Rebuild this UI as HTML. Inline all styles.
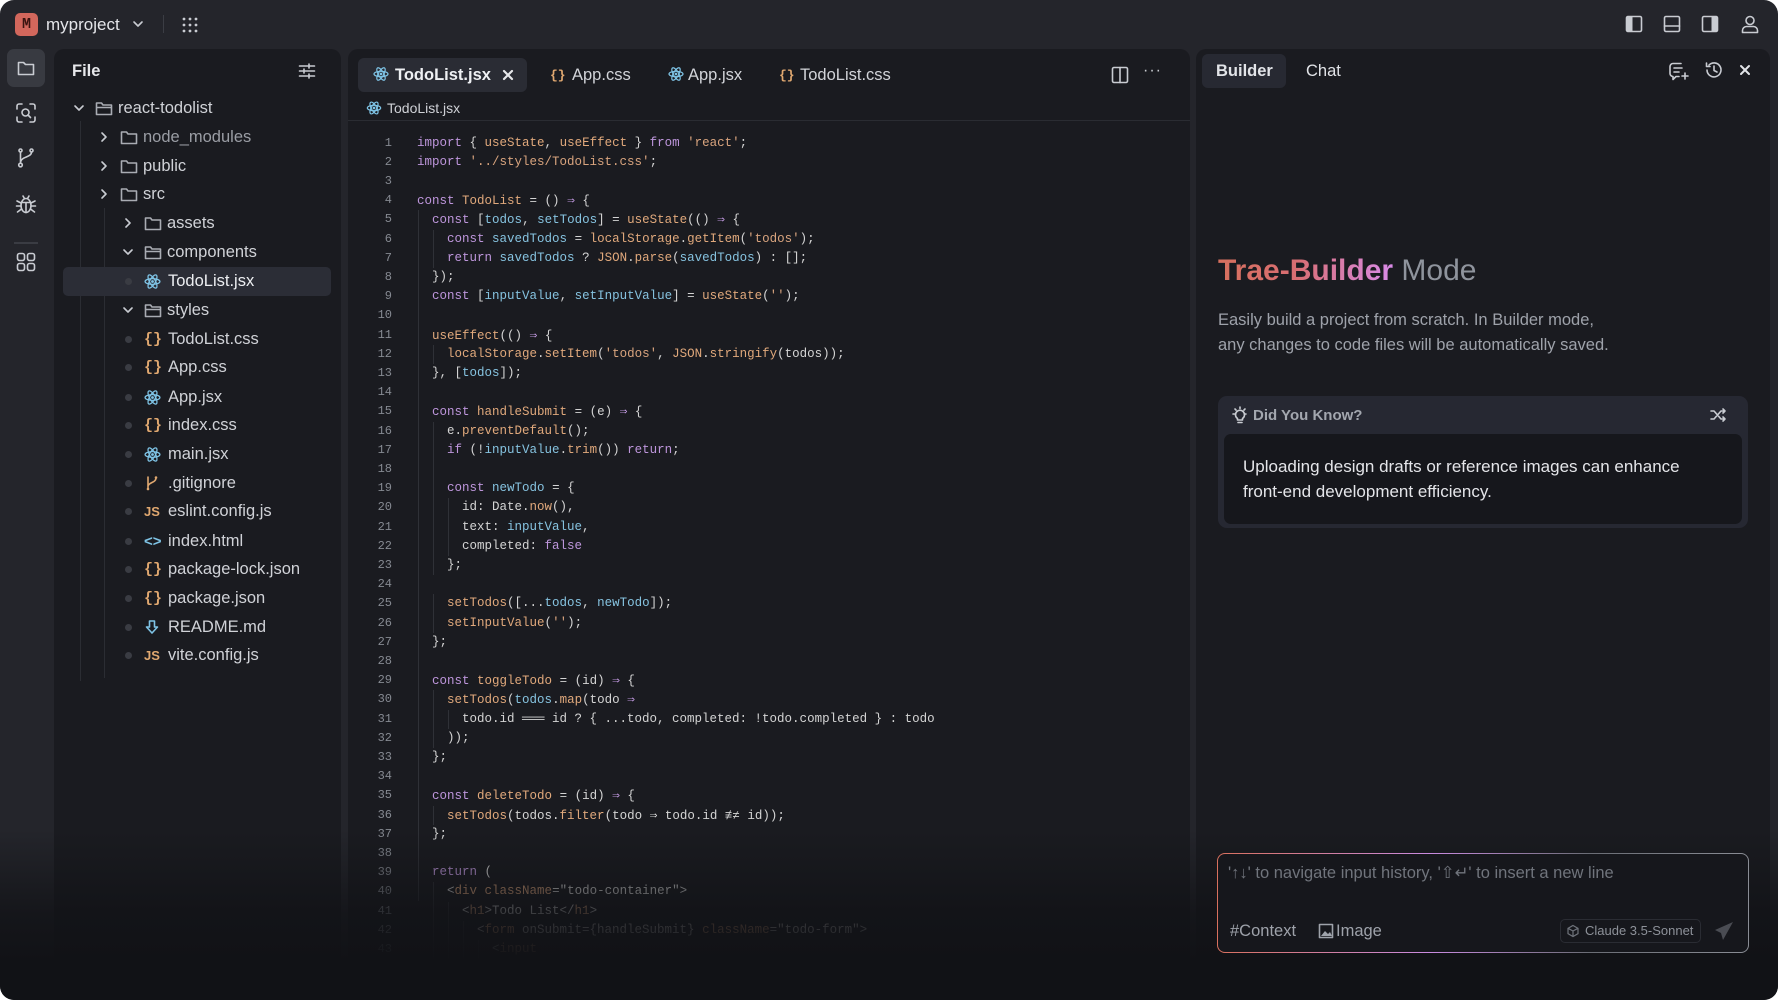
<!DOCTYPE html>
<html><head><meta charset="utf-8"><style>
*{margin:0;padding:0;box-sizing:border-box}
html,body{width:1778px;height:1000px;overflow:hidden;background:#fff}
body{font-family:"Liberation Sans",sans-serif;color:#d4d6db}
#win{position:absolute;left:0;top:0;width:1778px;height:1000px;background:#24252b;border-radius:14px;overflow:hidden}
.abs{position:absolute}
.panel{position:absolute;background:#1a1b20;border-radius:10px}
.row{position:absolute;height:29px;line-height:29px;font-size:16.5px;color:#d0d2d7;white-space:nowrap}
.code{position:absolute;left:0;font-family:"Liberation Mono",monospace;font-size:12.5px;white-space:pre;height:19.2px;line-height:19.2px;color:#d4d4d4}
.ln{position:absolute;width:40px;text-align:right;left:352px;font-family:"Liberation Mono",monospace;font-size:12px;color:#868a92;height:19.2px;line-height:19.2px}
.k{color:#be96dc}.f{color:#e1a97c}.v{color:#86c3e0}.s{color:#d9a47e}.t{color:#d6a07a}
.a{color:#be96dc;font-family:"DejaVu Sans Mono",monospace;font-size:13px}
.ic{stroke:#c9ccd2;fill:none;stroke-width:1.6;stroke-linecap:round;stroke-linejoin:round}
.dot{position:absolute;width:7px;height:7px;border-radius:50%;background:#3a3c43}
.br{color:#e0a870;font-family:"Liberation Mono",monospace;font-size:15px;font-weight:bold}
</style></head><body>
<div id="win">
<!-- top bar -->
<div class="abs" style="left:15px;top:13px;width:23px;height:23px;border-radius:5px;background:#d2675c;color:#3a1410;font-family:'Liberation Mono',monospace;font-size:15px;font-weight:bold;text-align:center;line-height:23px">M</div>
<div class="abs" style="left:46px;top:13px;font-size:17px;color:#e4e5e9;line-height:23px">myproject</div>
<svg class="abs" style="left:131px;top:18px" width="14" height="12"><path class="ic" d="M3 4l4 4 4-4"/></svg>
<div class="abs" style="left:163px;top:15px;width:1px;height:18px;background:#3b3d44"></div>
<svg class="abs" style="left:181px;top:16px" width="18" height="18" fill="#c9ccd2"><circle cx="3" cy="3" r="1.4"/><circle cx="9" cy="3" r="1.4"/><circle cx="15" cy="3" r="1.4"/><circle cx="3" cy="9" r="1.4"/><circle cx="9" cy="9" r="1.4"/><circle cx="15" cy="9" r="1.4"/><circle cx="3" cy="15" r="1.4"/><circle cx="9" cy="15" r="1.4"/><circle cx="15" cy="15" r="1.4"/></svg>
<svg class="abs" style="left:1625px;top:15px" width="18" height="18"><rect x="1.5" y="1.5" width="15" height="15" rx="1.5" class="ic"/><rect x="1.5" y="1.5" width="6" height="15" fill="#c9ccd2"/></svg>
<svg class="abs" style="left:1663px;top:15px" width="18" height="18"><rect x="1.5" y="1.5" width="15" height="15" rx="1.5" class="ic"/><path class="ic" d="M1.5 11h15"/></svg>
<svg class="abs" style="left:1701px;top:15px" width="18" height="18"><rect x="1.5" y="1.5" width="15" height="15" rx="1.5" class="ic"/><rect x="10.5" y="1.5" width="6" height="15" fill="#c9ccd2"/></svg>
<svg class="abs" style="left:1740px;top:14px" width="20" height="20"><circle cx="10" cy="6.5" r="4" class="ic"/><path class="ic" d="M2.5 18.5v-2a4 4 0 0 1 4-4h7a4 4 0 0 1 4 4v2z"/></svg>

<!-- activity bar -->
<div class="abs" style="left:7px;top:49px;width:38px;height:38px;border-radius:7px;background:#383a41"></div>
<svg class="abs" style="left:16px;top:58px" width="20" height="20"><path class="ic" d="M2.5 4.5h5l2 2h8v10h-15z"/></svg>
<svg class="abs" style="left:15px;top:102px" width="22" height="22"><path class="ic" d="M2 7V4a2 2 0 0 1 2-2h3M15 2h3a2 2 0 0 1 2 2v3M20 15v3a2 2 0 0 1-2 2h-3M7 20H4a2 2 0 0 1-2-2v-3"/><circle cx="10.5" cy="10.5" r="3.5" class="ic"/><path class="ic" d="M13 13l2.5 2.5"/></svg>
<svg class="abs" style="left:16px;top:147px" width="20" height="22"><circle cx="4.5" cy="18" r="1.8" class="ic"/><circle cx="4.5" cy="3.5" r="1.5" class="ic"/><circle cx="15.5" cy="3.5" r="1.5" class="ic"/><path class="ic" d="M4.5 5v11M15.5 5c0 6-11 4-11 11"/></svg>
<svg class="abs" style="left:15px;top:193px" width="22" height="22"><ellipse cx="11" cy="12.5" rx="5" ry="7" class="ic"/><path class="ic" d="M6.5 9.5h9M11 9.5v10M2 8l4 2M20 8l-4 2M1.5 13h4.5M20.5 13H16M2.5 19l4-3M19.5 19l-4-3M8 3l1.5 2.5M14 3l-1.5 2.5"/></svg>
<div class="abs" style="left:14px;top:242px;width:24px;height:2px;background:#3a3c43"></div>
<svg class="abs" style="left:16px;top:252px" width="20" height="20"><rect x="1.5" y="1.5" width="7" height="7" rx="2" class="ic"/><rect x="11.5" y="1.5" width="7" height="7" rx="2" class="ic"/><rect x="1.5" y="11.5" width="7" height="7" rx="2" class="ic"/><rect x="11.5" y="11.5" width="7" height="7" rx="2" class="ic"/></svg>

<!-- file panel -->
<div class="panel" style="left:54px;top:49px;width:287px;height:930px"></div>
<div class="abs" style="left:72px;top:60px;font-size:16.5px;font-weight:bold;color:#e6e7ea;line-height:22px">File</div>
<svg class="abs" style="left:298px;top:62px" width="18" height="18"><path class="ic" d="M1.5 4h15M1.5 9h15M1.5 14h15"/><path class="ic" d="M11 2v4M6 7v4M11 12v4" stroke-width="2"/></svg>
<div class="abs" style="left:80px;top:121px;width:1px;height:560px;background:#2b2d33"></div>
<div class="abs" style="left:104px;top:208px;width:1px;height:470px;background:#2b2d33"></div>
<div class="abs" style="left:63px;top:267px;width:268px;height:29px;border-radius:5px;background:#2b2d36"></div>
<div id="tree"></div>

<!-- editor panel -->
<div class="panel" style="left:348px;top:49px;width:842px;height:930px"></div>
<div class="abs" style="left:358px;top:58px;width:169px;height:34px;border-radius:6px;background:#2a2c34"></div>
<div id="tabs"></div>
<svg class="abs" style="left:1111px;top:66px" width="18" height="18"><rect x="1.5" y="1.5" width="15" height="15" rx="1.5" class="ic"/><path class="ic" d="M9 1.5v15"/></svg>
<div class="abs" style="left:1143px;top:62px;font-size:16px;color:#c9ccd2;letter-spacing:1px">···</div>
<svg class="abs" style="left:366px;top:100px" width="16" height="16" viewBox="0 0 24 24"><g fill="none" stroke="#7fc4e6" stroke-width="1.8"><ellipse cx="12" cy="12" rx="10" ry="4"/><ellipse cx="12" cy="12" rx="10" ry="4" transform="rotate(60 12 12)"/><ellipse cx="12" cy="12" rx="10" ry="4" transform="rotate(120 12 12)"/></g><circle cx="12" cy="12" r="2" fill="#7fc4e6"/></svg>
<div class="abs" style="left:387px;top:99px;font-size:14px;color:#cfd1d6;line-height:18px">TodoList.jsx</div>
<div class="abs" style="left:348px;top:120px;width:842px;height:1px;background:#2a2c32"></div>
<div id="code"></div>

<!-- right panel -->
<div class="panel" style="left:1196px;top:49px;width:574px;height:930px"></div>
<div class="abs" style="left:1202px;top:54px;width:84px;height:34px;border-radius:6px;background:#272932"></div>
<div class="abs" style="left:1216px;top:61px;font-size:16.5px;font-weight:bold;color:#e2e4e8;line-height:20px">Builder</div>
<div class="abs" style="left:1306px;top:61px;font-size:16.5px;color:#e2e4e8;line-height:20px">Chat</div>
<svg class="abs" style="left:1668px;top:61px" width="22" height="20"><path class="ic" d="M13 2.5H5a3 3 0 0 0-3 3v7a3 3 0 0 0 3 3v3l3-3h3"/><path class="ic" d="M6 7h8M6 11h5M17 12v6M14 15h6"/></svg>
<svg class="abs" style="left:1704px;top:60px" width="20" height="20"><path class="ic" d="M3 10a7 7 0 1 0 2-5M2.5 3v3.5H6M10 6v4.5l3 1.5"/></svg>
<svg class="abs" style="left:1739px;top:64px" width="12" height="12"><path class="ic" d="M2 2l8 8M10 2l-8 8" style="stroke:#e2e4e8;stroke-width:2"/></svg>

<div class="abs" style="left:1218px;top:251px;font-size:30px;font-weight:bold;line-height:40px;white-space:nowrap"><span style="background:linear-gradient(90deg,#d7705e,#d86e73 45%,#d98be8);-webkit-background-clip:text;background-clip:text;color:transparent">Trae-Builder</span><span style="color:#8f949d;font-weight:normal"> Mode</span></div>
<div class="abs" style="left:1218px;top:308px;font-size:16.5px;line-height:25px;color:#9ea2aa;width:520px">Easily build a project from scratch. In Builder mode,<br>any changes to code files will be automatically saved.</div>

<div class="abs" style="left:1218px;top:396px;width:530px;height:132px;border-radius:9px;background:#262832"></div>
<svg class="abs" style="left:1231px;top:406px" width="18" height="18"><path class="ic" d="M6.5 12.5a4.5 4.5 0 1 1 5 0V14h-5zM7 16.5h4M9 1v1.5M2 8h1.5M15 8h-1.5M4 3l1 1M14 3l-1 1"/></svg>
<div class="abs" style="left:1253px;top:407px;font-size:15px;font-weight:bold;color:#a3a7af;line-height:18px">Did You Know?</div>
<svg class="abs" style="left:1709px;top:406px" width="18" height="18"><path class="ic" d="M2 5h3l7 8h4M2 13h3l7-8h4M14 3l2 2-2 2M14 11l2 2-2 2"/></svg>
<div class="abs" style="left:1224px;top:434px;width:518px;height:90px;border-radius:7px;background:#16171c"></div>
<div class="abs" style="left:1243px;top:454px;font-size:17px;line-height:25px;color:#e4e5e9;width:480px">Uploading design drafts or reference images can enhance<br>front-end development efficiency.</div>

<!-- global bottom fade -->
<div class="abs" style="left:0;top:830px;width:1778px;height:170px;background:linear-gradient(rgba(17,18,22,0),rgba(17,18,22,0.8) 50%,#111216 78%)"></div>

<div class="abs" style="left:1217px;top:853px;width:532px;height:100px;border-radius:8px;padding:1px;background:linear-gradient(90deg,#d9705e,#c98be0 40%,#6a6d75 70%,#8a8d95)"><div style="width:100%;height:100%;border-radius:7px;background:#16171c"></div></div>
<div class="abs" style="left:1228px;top:863px;font-size:16.5px;color:#70747c;line-height:20px;white-space:nowrap">'↑↓' to navigate input history, '⇧↵' to insert a new line</div>
<div class="abs" style="left:1230px;top:921px;font-size:16.5px;color:#9ea2aa;line-height:20px">#Context</div>
<svg class="abs" style="left:1318px;top:923px" width="16" height="16"><rect x="1.5" y="1.5" width="13" height="13" class="ic" style="stroke:#9ea2aa"/><path d="M3 13l4-5 3 3 2-2 2 4z" fill="#9ea2aa"/></svg>
<div class="abs" style="left:1336px;top:921px;font-size:16.5px;color:#9ea2aa;line-height:20px">Image</div>
<div class="abs" style="left:1560px;top:919px;width:141px;height:24px;border-radius:5px;border:1px solid #2a2c33"></div>
<svg class="abs" style="left:1566px;top:924px" width="14" height="14"><path d="M7 1.5l5 2.8v5.4L7 12.5 2 9.7V4.3zM2 4.3L7 7l5-2.7M7 7v5.5" fill="none" stroke="#6f737b" stroke-width="1.2"/></svg>
<div class="abs" style="left:1585px;top:923px;font-size:13px;color:#8d9199;line-height:16px">Claude 3.5-Sonnet</div>
<svg class="abs" style="left:1713px;top:920px" width="22" height="22"><path d="M20 2L2 10l6 3 2 7z" fill="#4a4c53"/></svg>
</div>
<script>
const tree=[
[0,'c','fo','react-todolist',108,'#d0d2d7'],
[1,'r','f','node_modules',137,'#9a9da4'],
[1,'r','f','public',166],
[1,'r','f','src',194],
[2,'r','f','assets',223],
[2,'c','fo','components',252],
[3,'d','react','TodoList.jsx',281,'#eceef1'],
[2,'c','fo','styles',310],
[3,'d','css','TodoList.css',339],
[3,'d','css','App.css',367],
[3,'d','react','App.jsx',397],
[3,'d','css','index.css',425],
[3,'d','react','main.jsx',454],
[3,'d','git','.gitignore',483],
[3,'d','js','eslint.config.js',511],
[3,'d','html','index.html',541],
[3,'d','css','package-lock.json',569],
[3,'d','css','package.json',598],
[3,'d','md','README.md',627],
[3,'d','js','vite.config.js',655]];
const react='<svg width="17" height="17" viewBox="0 0 24 24"><g fill="none" stroke="#7fc4e6" stroke-width="1.8"><ellipse cx="12" cy="12" rx="10.5" ry="4"/><ellipse cx="12" cy="12" rx="10.5" ry="4" transform="rotate(60 12 12)"/><ellipse cx="12" cy="12" rx="10.5" ry="4" transform="rotate(120 12 12)"/></g><circle cx="12" cy="12" r="2" fill="#7fc4e6"/></svg>';
let h='';
for(const [lv,ch,ic,name,y,col] of tree){
 const base=lv===3?128:(lv===0?79:lv===1?104:128);
 const top=y-14;
 if(ch==='c') h+=`<svg class="abs" style="left:${base-6}px;top:${y-6}px" width="12" height="12"><path class="ic" d="M2 4l4 4 4-4"/></svg>`;
 if(ch==='r') h+=`<svg class="abs" style="left:${base-6}px;top:${y-6}px" width="12" height="12"><path class="ic" d="M4 2l4 4-4 4"/></svg>`;
 if(ch==='d') h+=`<div class="dot" style="left:${base-3}px;top:${y-3}px"></div>`;
 const ix=lv===3?144:base+16;
 let icon='';
 if(ic==='f') icon='<svg width="18" height="16"><path class="ic" style="stroke:#a9acb3" d="M1.5 3h5l1.5 2h8.5v9.5h-15z"/></svg>';
 else if(ic==='fo') icon='<svg width="18" height="16"><path class="ic" style="stroke:#a9acb3" d="M1.5 3h5l1.5 2h8.5v9.5h-15zM1.5 7.5h15"/></svg>';
 else if(ic==='react') icon=react;
 else if(ic==='css') icon='<span class="br">{}</span>';
 else if(ic==='js') icon='<span style="color:#e0a870;font-size:13px;font-weight:bold">JS</span>';
 else if(ic==='html') icon='<span style="color:#7fc4e6;font-size:15px;font-weight:bold">&lt;&gt;</span>';
 else if(ic==='git') icon='<svg width="16" height="16"><circle cx="12" cy="2.5" r="1.3" fill="#e0a870"/><circle cx="4" cy="14" r="1.3" fill="#e0a870"/><path class="ic" style="stroke:#e0a870" d="M4 2v12M12 3c0 5-8 4-8 9"/></svg>';
 else if(ic==='md') icon='<svg width="16" height="16"><path class="ic" style="stroke:#7fc4e6" d="M5.5 2h5v6h3L8 14 2.5 8h3z"/></svg>';
 h+=`<div class="abs" style="left:${ix}px;top:${y-9}px;height:18px;display:flex;align-items:center">${icon}</div>`;
 const tx=lv===3?168:base+39;
 h+=`<div class="row" style="left:${tx}px;top:${top}px;${col?'color:'+col:''}">${name}</div>`;
}
document.getElementById('tree').innerHTML=h;
const tabs=[[379,395,'TodoList.jsx','r',1],[556,572,'App.css','c'],[674,688,'App.jsx','r'],[785,800,'TodoList.css','c']];
let t='';
for(const [ix,tx,n,k,a] of tabs){
 t+=`<div class="abs" style="left:${ix-6}px;top:66px">${k==='r'?react.replace('width="17" height="17"','width="16" height="16"'):'<span class="br" style="font-size:13px">{}</span>'}</div>`;
 t+=`<div class="abs" style="left:${tx}px;top:65px;font-size:16.5px;line-height:20px;color:${a?'#eef0f3':'#d2d4d9'};${a?'font-weight:bold':''}">${n}</div>`;
}
t+='<svg class="abs" style="left:502px;top:69px" width="12" height="12"><path class="ic" d="M2 2l8 8M10 2l-8 8" style="stroke:#e6e7ea;stroke-width:2.2"/></svg>';
document.getElementById('tabs').innerHTML=t;
const A='<span class="a">⇒</span>';
const L=[
'<span class="k">import</span> { <span class="f">useState</span>, <span class="f">useEffect</span> } <span class="k">from</span> <span class="s">\'react\'</span>;',
'<span class="k">import</span> <span class="s">\'../styles/TodoList.css\'</span>;',
'',
'<span class="k">const</span> <span class="f">TodoList</span> = () '+A+' {',
'  <span class="k">const</span> [<span class="v">todos</span>, <span class="v">setTodos</span>] = <span class="f">useState</span>(() '+A+' {',
'    <span class="k">const</span> <span class="v">savedTodos</span> = <span class="f">localStorage</span>.<span class="f">getItem</span>(<span class="s">\'todos\'</span>);',
'    <span class="k">return</span> <span class="v">savedTodos</span> ? <span class="f">JSON</span>.<span class="f">parse</span>(<span class="v">savedTodos</span>) : [];',
'  });',
'  <span class="k">const</span> [<span class="v">inputValue</span>, <span class="v">setInputValue</span>] = <span class="f">useState</span>(<span class="s">\'\'</span>);',
'',
'  <span class="f">useEffect</span>(() '+A+' {',
'    <span class="f">localStorage</span>.<span class="f">setItem</span>(<span class="s">\'todos\'</span>, <span class="f">JSON</span>.<span class="f">stringify</span>(todos));',
'  }, [<span class="v">todos</span>]);',
'',
'  <span class="k">const</span> <span class="f">handleSubmit</span> = (e) '+A+' {',
'    e.<span class="f">preventDefault</span>();',
'    <span class="k">if</span> (!<span class="v">inputValue</span>.<span class="f">trim</span>()) <span class="k">return</span>;',
'',
'    <span class="k">const</span> <span class="v">newTodo</span> = {',
'      id: Date.<span class="f">now</span>(),',
'      text: <span class="v">inputValue</span>,',
'      completed: <span class="k">false</span>',
'    };',
'',
'    <span class="f">setTodos</span>([...<span class="v">todos</span>, <span class="v">newTodo</span>]);',
'    <span class="f">setInputValue</span>(<span class="s">\'\'</span>);',
'  };',
'',
'  <span class="k">const</span> <span class="f">toggleTodo</span> = (id) '+A+' {',
'    <span class="f">setTodos</span>(<span class="v">todos</span>.<span class="f">map</span>(todo '+A,
'      todo.id ═══ id ? { ...todo, completed: !todo.completed } : todo',
'    ));',
'  };',
'',
'  <span class="k">const</span> <span class="f">deleteTodo</span> = (id) '+A+' {',
'    <span class="f">setTodos</span>(todos.<span class="f">filter</span>(todo <span style="font-family:DejaVu Sans Mono;font-size:13px">⇒</span> todo.id ≢≠ id));',
'  };',
'',
'  <span class="k">return</span> (',
'    &lt;<span class="t">div</span> <span class="t">className</span>="todo-container"&gt;',
'      &lt;<span class="t">h1</span>&gt;Todo List&lt;/<span class="t">h1</span>&gt;',
'        &lt;<span class="t">form</span> onSubmit={handleSubmit} <span class="t">className</span>="todo-form"&gt;',
'          &lt;<span class="t">input</span>'];
let c='';
for(let i=0;i<L.length;i++){
 const y=133.5+i*19.2;
 c+=`<div class="ln" style="top:${y}px">${i+1}</div>`;
 c+=`<div class="code" style="left:417px;top:${y}px">${L[i]}</div>`;
}
const g=[[433,5,8],[433,9,40],[448,6,7],[448,12,12],[448,16,23],[448,25,26],[448,30,32],[448,36,36],[448,40,43],[463,20,22],[463,31,31],[463,41,43],[478,42,43],[493,43,43]];
for(const [x,a,b] of g){c+=`<div class="abs" style="left:${x-15}px;top:${133.5+(a-1)*19.2}px;width:1px;height:${(b-a+1)*19.2}px;background:#2f3137"></div>`;}
document.getElementById('code').innerHTML=c;
</script>
</body></html>
